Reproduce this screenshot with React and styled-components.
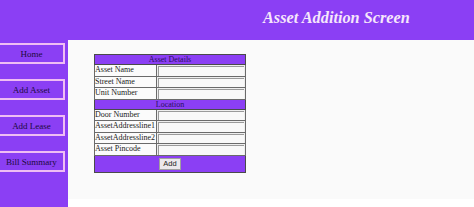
import React from 'react'
import styled, { createGlobalStyle } from 'styled-components'

const purple = '#8b3ff4'

const Global = createGlobalStyle`
  html, body {
    margin: 0;
    padding: 0;
    background: #ffffff;
    font-family: 'Liberation Serif', 'Times New Roman', serif;
  }
`

const Page = styled.div`
  display: flex;
  flex-direction: column;
  width: 100%;
  height: 100vh;
`

const Header = styled.header`
  height: 40px;
  flex: none;
  background: ${purple};
  display: flex;
  align-items: center;
  padding-left: 263px;
  box-sizing: border-box;
`

const Title = styled.h1`
  margin: 0 0 4px 0;
  font-size: 16.3px;
  font-style: italic;
  font-weight: 700;
  color: #f6e6fb;
`

const Body = styled.div`
  display: flex;
  flex: 1;
`

const Sidebar = styled.nav`
  width: 68px;
  flex: none;
  background: ${purple};
  display: flex;
  flex-direction: column;
  gap: 15px;
  padding-top: 3px;
`

const NavButton = styled.div`
  width: 65px;
  height: 21px;
  box-sizing: border-box;
  border: 2px solid #efbdf3;
  border-left: none;
  display: flex;
  align-items: center;
  justify-content: center;
  font-size: 9px;
  color: #1c0a40;
`

const Main = styled.main`
  flex: 1;
  height: 159px;
  background: #fafafa;
  padding: 14px 0 0 26px;
  box-sizing: border-box;
`

const Table = styled.table`
  width: 152px;
  border-collapse: collapse;
  border: 1px solid #4a4a4a;
  font-size: 8px;
  color: #1a1a1a;
`

const SectionCell = styled.td`
  background: ${purple};
  color: #2a1060;
  text-align: center;
  height: 9px;
  padding: 0;
  line-height: 9px;
  border: 1px solid #4a4a4a;
`

const Label = styled.td`
  width: 60px;
  height: 10.5px;
  padding: 0 1px 0 0;
  line-height: 10px;
  white-space: nowrap;
  border: 1px solid #6a6a6a;
  background: #fbfbfb;
`

const Field = styled.td`
  padding: 1px 1px 0 1px;
  border: 1px solid #6a6a6a;
  background: #eeeeee;
`

const Input = styled.div`
  height: 9.5px;
  box-sizing: border-box;
  border-top: 1px solid #9a9a9a;
  border-left: 1px solid #9a9a9a;
  background: #f8f8f8;
`

const ButtonCell = styled.td`
  background: ${purple};
  text-align: center;
  padding: 2px 0;
  border: 1px solid #4a4a4a;
`

const AddButton = styled.button`
  font-family: 'Liberation Sans', Arial, sans-serif;
  font-size: 7.5px;
  padding: 0 3px;
  height: 12px;
  line-height: 10px;
  background: #ece8ec;
  border: 1px solid #a0a0a0;
  color: #222;
`

const navItems = ['Home', 'Add Asset', 'Add Lease', 'Bill Summary']

const assetFields = ['Asset Name', 'Street Name', 'Unit Number']
const locationFields = ['Door Number', 'AssetAddressline1', 'AssetAddressline2', 'Asset Pincode']

const FieldRow = ({ label }) => (
  <tr>
    <Label>{label}</Label>
    <Field>
      <Input />
    </Field>
  </tr>
)

const App = () => (
  <Page>
    <Global />
    <Header>
      <Title>Asset Addition Screen</Title>
    </Header>
    <Body>
      <Sidebar>
        {navItems.map((item) => (
          <NavButton key={item}>{item}</NavButton>
        ))}
      </Sidebar>
      <Main>
        <Table>
          <tbody>
            <tr>
              <SectionCell colSpan={2}>Asset Details</SectionCell>
            </tr>
            {assetFields.map((f) => (
              <FieldRow key={f} label={f} />
            ))}
            <tr>
              <SectionCell colSpan={2}>Location</SectionCell>
            </tr>
            {locationFields.map((f) => (
              <FieldRow key={f} label={f} />
            ))}
            <tr>
              <ButtonCell colSpan={2}>
                <AddButton>Add</AddButton>
              </ButtonCell>
            </tr>
          </tbody>
        </Table>
      </Main>
    </Body>
  </Page>
)

export default App
